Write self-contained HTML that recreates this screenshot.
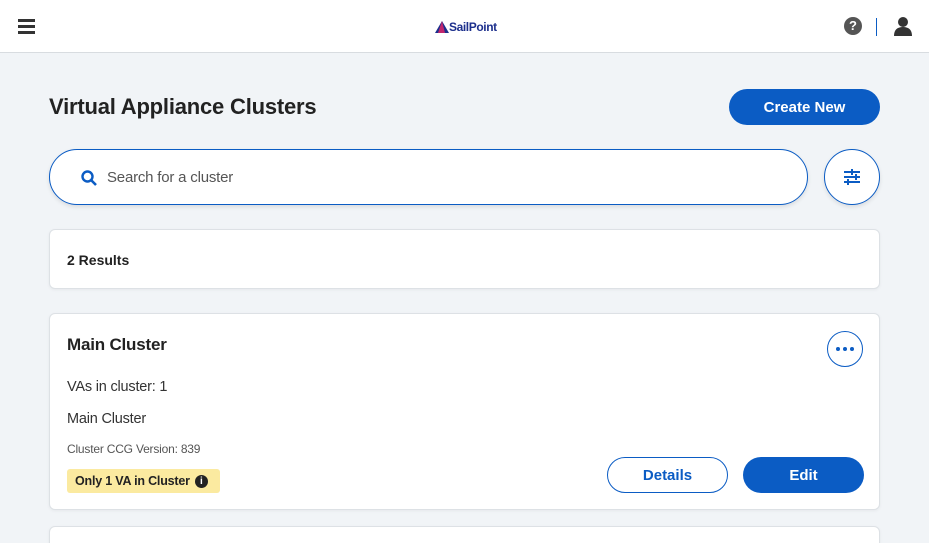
<!DOCTYPE html>
<html><head><style>
*{box-sizing:border-box;margin:0;padding:0}
html,body{width:929px;height:543px;overflow:hidden}
body{background:#f1f4f7;font-family:"Liberation Sans",sans-serif;color:#222;position:relative}
.top{position:absolute;left:0;top:0;width:929px;height:53px;background:#fff;border-bottom:1px solid #d8dce0}
.abs{position:absolute}
.card{position:absolute;background:#fff;border:1px solid #dde1e5;border-radius:6px;box-shadow:0 1px 3px rgba(0,0,0,.05)}
.btn{position:absolute;border-radius:18px;font-weight:bold;font-size:15px;display:flex;align-items:center;justify-content:center}
</style></head><body>
<div class="top">
 <div class="abs" style="left:18px;top:19px;width:17px;height:2.5px;background:#333;box-shadow:0 6px 0 #333,0 12px 0 #333"></div>
 <svg class="abs" style="left:435px;top:21px" width="14" height="12"><polygon points="7,0 14,12 0,12" fill="#1c2f8c"/><polygon points="7,0 10,12 3,12" fill="#c0266e"/></svg>
 <div class="abs" style="left:449px;top:20px;font-size:12px;font-weight:bold;color:#1c2f8c;letter-spacing:-.4px">SailPoint</div>
 <div class="abs" style="left:844px;top:17px;width:18px;height:18px;border-radius:50%;background:#555;color:#fff;font-size:13px;font-weight:bold;text-align:center;line-height:18px">?</div>
 <div class="abs" style="left:876px;top:18px;width:1px;height:18px;background:#0b5cc4"></div>
 <svg class="abs" style="left:893px;top:16px" width="20" height="20"><circle cx="10" cy="6" r="5" fill="#333"/><path d="M1 20 Q1 11 10 11 Q19 11 19 20Z" fill="#333"/></svg>
</div>
<div class="abs" style="left:49px;top:94px;font-size:22px;font-weight:bold;color:#222;letter-spacing:-.2px">Virtual Appliance Clusters</div>
<div class="btn" style="left:729px;top:89px;width:151px;height:36px;background:#0b5cc4;color:#fff">Create New</div>
<div class="abs" style="left:49px;top:149px;width:759px;height:56px;border:1px solid #0b5cc4;border-radius:28px;background:#fff;box-shadow:0 2px 4px rgba(0,0,0,.1)">
 <svg class="abs" style="left:31px;top:20px" width="16" height="16"><circle cx="6.5" cy="6.5" r="5" stroke="#0b5cc4" stroke-width="2.4" fill="none"/><line x1="10" y1="10" x2="15" y2="15" stroke="#0b5cc4" stroke-width="2.6"/></svg>
 <div class="abs" style="left:57px;top:19px;font-size:15px;color:#555;letter-spacing:-.2px">Search for a cluster</div>
</div>
<div class="abs" style="left:824px;top:149px;width:56px;height:56px;border:1px solid #0b5cc4;border-radius:50%;background:#fff;box-shadow:0 2px 4px rgba(0,0,0,.1)">
 <svg class="abs" style="left:18px;top:18px" width="18" height="18"><g stroke="#0b5cc4" stroke-width="2"><line x1="1" y1="4" x2="17" y2="4"/><line x1="1" y1="9" x2="17" y2="9"/><line x1="1" y1="14" x2="17" y2="14"/><line x1="9" y1="1" x2="9" y2="7"/><line x1="13" y1="6" x2="13" y2="12"/><line x1="5" y1="11" x2="5" y2="17"/></g></svg>
</div>
<div class="card" style="left:49px;top:229px;width:831px;height:60px"><div class="abs" style="left:17px;top:22px;font-size:14px;font-weight:bold">2 Results</div></div>
<div class="card" style="left:49px;top:313px;width:831px;height:197px">
 <div class="abs" style="left:17px;top:21px;font-size:17px;font-weight:bold;letter-spacing:-.2px">Main Cluster</div>
 <div class="abs" style="left:777px;top:17px;width:36px;height:36px;border:1px solid #0b5cc4;border-radius:50%;display:flex;align-items:center;justify-content:center;gap:3px">
  <i style="width:4px;height:4px;border-radius:50%;background:#0b5cc4"></i><i style="width:4px;height:4px;border-radius:50%;background:#0b5cc4"></i><i style="width:4px;height:4px;border-radius:50%;background:#0b5cc4"></i></div>
 <div class="abs" style="left:17px;top:65px;font-size:14.5px;color:#333;letter-spacing:-.2px">VAs in cluster: 1</div>
 <div class="abs" style="left:17px;top:97px;font-size:14.5px;color:#333;letter-spacing:-.2px">Main Cluster</div>
 <div class="abs" style="left:17px;top:128px;font-size:12px;color:#555;letter-spacing:-.2px">Cluster CCG Version: 839</div>
 <div class="abs" style="left:17px;top:155px;width:153px;height:24px;background:#fbeaa0;border-radius:3px;font-size:12.5px;font-weight:bold;padding:5px 8px;white-space:nowrap;display:flex;align-items:center;letter-spacing:-.2px">Only 1 VA in Cluster <span style="display:inline-block;width:13px;height:13px;border-radius:50%;background:#222;color:#fff;font-size:10px;text-align:center;line-height:13px;margin-left:5px">i</span></div>
 <div class="btn" style="left:557px;top:143px;width:121px;height:36px;border:1px solid #0b5cc4;color:#0b5cc4;background:#fff">Details</div>
 <div class="btn" style="left:693px;top:143px;width:121px;height:36px;background:#0b5cc4;color:#fff">Edit</div>
</div>
<div class="card" style="left:49px;top:526px;width:831px;height:40px"></div>
</body></html>
